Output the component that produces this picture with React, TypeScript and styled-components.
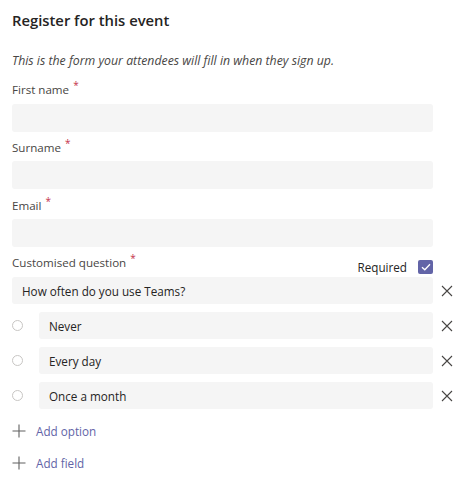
import React from 'react';
import styled, { createGlobalStyle } from 'styled-components';

const GlobalStyle = createGlobalStyle`
  body {
    margin: 0;
    background: #ffffff;
    font-family: "Open Sans", "Noto Sans", sans-serif;
    color: #252423;
  }
`;

const Page = styled.div`
  width: 474px;
  padding: 8px 13px 0 12px;
  box-sizing: border-box;
`;

const Title = styled.h2`
  margin: 0;
  font-size: 14.8px;
  font-weight: 600;
  line-height: 24px;
  color: #252423;
`;

const Subtitle = styled.p`
  margin: 19px 0 0;
  font-size: 12.3px;
  font-style: italic;
  line-height: 20px;
  color: #484644;
`;

const Label = styled.div<{ $top: number }>`
  display: flex;
  align-items: flex-end;
  font-size: 11.6px;
  line-height: 20px;
  color: #484644;
  margin-top: ${(p) => p.$top}px;
`;

const Star = styled.span`
  color: #c4314b;
  font-size: 10px;
  margin-left: 4px;
  position: relative;
  top: -5px;
`;

const Field = styled.div<{ $top: number }>`
  height: 28px;
  width: 421px;
  margin-top: ${(p) => p.$top}px;
  background: #f5f5f5;
  border-radius: 3px;
`;

const QuestionHead = styled.div`
  display: flex;
  justify-content: space-between;
  align-items: flex-end;
  width: 421px;
  margin-top: 6px;
`;

const Required = styled.label`
  display: flex;
  align-items: center;
  gap: 11px;
  font-size: 11.7px;
  color: #252423;
  line-height: 20px;
  margin-bottom: -4px;
`;

const Check = styled.span`
  width: 15px;
  height: 14px;
  border-radius: 2px;
  background: #6264a7;
  display: flex;
  align-items: center;
  justify-content: center;
`;

const Row = styled.div<{ $top: number }>`
  display: flex;
  align-items: center;
  margin-top: ${(p) => p.$top}px;
`;

const Radio = styled.span`
  width: 9px;
  height: 9px;
  border: 1px solid #c8c6c4;
  border-radius: 50%;
  margin-right: 16px;
  flex-shrink: 0;
`;

const Input = styled.div`
  flex: 1;
  height: 27px;
  background: #f5f5f5;
  border-radius: 3px;
  display: flex;
  align-items: center;
  padding: 0 10px;
  font-size: 11.7px;
  color: #252423;
`;

const Remove = styled.button`
  width: 28px;
  height: 27px;
  border: none;
  background: none;
  padding: 0;
  display: flex;
  align-items: center;
  justify-content: center;
  cursor: pointer;
`;

const AddLink = styled.button<{ $top: number }>`
  display: flex;
  align-items: center;
  gap: 10px;
  border: none;
  background: none;
  padding: 0;
  margin-top: ${(p) => p.$top}px;
  font-family: inherit;
  font-size: 11.7px;
  color: #6264a7;
  line-height: 20px;
  cursor: pointer;
`;

const CloseIcon = () => (
  <svg width="12" height="12" viewBox="0 0 12 12">
    <path d="M1 1 L11 11 M11 1 L1 11" stroke="#484644" strokeWidth="1.1" fill="none" />
  </svg>
);

const PlusIcon = () => (
  <svg width="14" height="14" viewBox="0 0 14 14">
    <path d="M7 0.5 V13.5 M0.5 7 H13.5" stroke="#616161" strokeWidth="1.1" fill="none" />
  </svg>
);

const CheckMark = () => (
  <svg width="10" height="8" viewBox="0 0 10 8">
    <path d="M1 4.2 L3.8 6.8 L9 1.2" stroke="#ffffff" strokeWidth="1.3" fill="none" />
  </svg>
);

const options = ['Never', 'Every day', 'Once a month'];

const App: React.FC = () => {
  return (
    <>
      <GlobalStyle />
      <Page>
        <Title>Register for this event</Title>
        <Subtitle>This is the form your attendees will fill in when they sign up.</Subtitle>

        <Label $top={9}>First name<Star>*</Star></Label>
        <Field $top={4} />

        <Label $top={6}>Surname<Star>*</Star></Label>
        <Field $top={3} />

        <Label $top={7}>Email<Star>*</Star></Label>
        <Field $top={3} />

        <QuestionHead>
          <Label $top={0}>Customised question<Star>*</Star></Label>
          <Required>
            Required
            <Check><CheckMark /></Check>
          </Required>
        </QuestionHead>

        <Row $top={4}>
          <Input>How often do you use Teams?</Input>
          <Remove><CloseIcon /></Remove>
        </Row>

        {options.map((opt) => (
          <Row key={opt} $top={8}>
            <Radio />
            <Input>{opt}</Input>
            <Remove><CloseIcon /></Remove>
          </Row>
        ))}

        <AddLink $top={12}><PlusIcon />Add option</AddLink>
        <AddLink $top={12}><PlusIcon />Add field</AddLink>
      </Page>
    </>
  );
};

export default App;
